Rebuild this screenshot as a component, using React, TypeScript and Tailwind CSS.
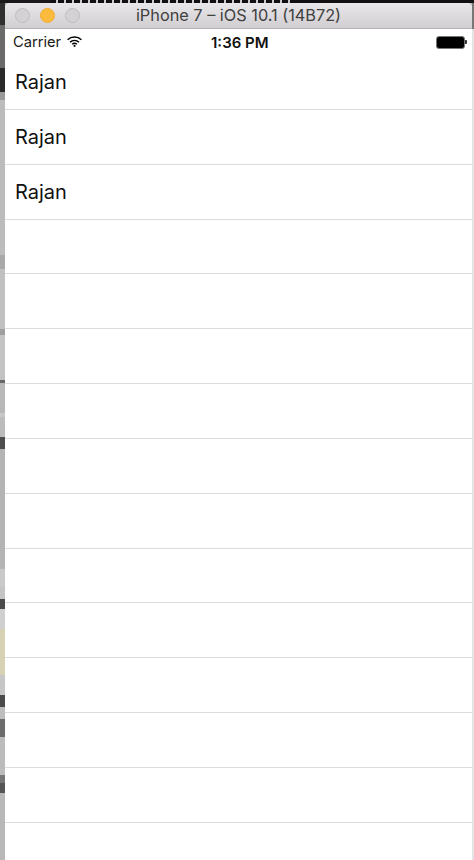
const lineCount = 14;
const names = ["Rajan", "Rajan", "Rajan"];

const leftStrip: [number, string][] = [
  [3, "#1a1a1a"], [22, "#2f2f2f"], [43, "#6a6a6a"], [24, "#2a2a2a"], [8, "#9a9a9a"],
  [155, "#bcbcbc"], [14, "#a9a9a9"], [60, "#c0c0c0"], [6, "#9f9f9f"], [45, "#c3c3c3"],
  [3, "#666666"], [30, "#b8b8b8"], [4, "#c8c8c8"], [20, "#bcbcbc"], [12, "#4d4d4d"],
  [120, "#b4b4b4"], [18, "#c9c9c9"], [12, "#c4c4c4"], [10, "#4a4a4a"], [20, "#cfcfcf"],
  [46, "#d8d2b4"], [20, "#c6c6c6"], [12, "#4a4a4a"], [12, "#bdbdbd"], [18, "#6b6b6b"],
  [38, "#bcbcbc"], [8, "#777777"], [10, "#555555"], [50, "#b8b8b8"],
];

function Wifi() {
  return (
    <svg width="15" height="11" viewBox="0 0 15 11" className="ml-[6px] -mt-[1px]">
      <path d="M0.6 3.8C4.4 0.2 10.6 0.2 14.4 3.8" fill="none" stroke="#000" strokeWidth="1.5" />
      <path d="M3 6.2C5.6 3.8 9.4 3.8 12 6.2" fill="none" stroke="#000" strokeWidth="1.5" />
      <path d="M5.2 8.3C6.6 7 8.4 7 9.8 8.3" fill="none" stroke="#000" strokeWidth="1.5" />
      <circle cx="7.5" cy="9.8" r="1.1" fill="#000" />
    </svg>
  );
}

function Battery() {
  return (
    <div className="flex items-center">
      <div className="w-[29px] h-[13px] rounded-[3px] border border-[#777777] bg-black" />
      <div className="w-[2px] h-[4px] bg-[#333333] rounded-r-[1px]" />
    </div>
  );
}

function Light({ color }: { color: string }) {
  return <div className={`w-[15px] h-[15px] rounded-full border ${color}`} />;
}

export default function App() {
  return (
    <div className="w-[474px] h-[860px] overflow-hidden flex bg-[#b8b8b8] font-['Inter',sans-serif]">
      <div className="w-[5px] shrink-0 flex flex-col">
        {leftStrip.map(([h, c], i) => (
          <div key={i} className="shrink-0" style={{ height: h, backgroundColor: c }} />
        ))}
      </div>
      <div className="flex-1 flex flex-col min-w-0">
        <div className="h-[3px] shrink-0 flex">
          <div className="w-[45px] bg-[#1a1a1a]" />
          <div className="w-[240px] bg-[repeating-linear-gradient(90deg,#111111_0,#111111_6px,#cccccc_6px,#cccccc_8px)]" />
          <div className="flex-1 bg-[#111111]" />
        </div>
        <div className="flex-1 flex flex-col min-h-0 rounded-t-[5px] overflow-hidden bg-white">
          <div className="h-[26px] shrink-0 relative flex items-center justify-center bg-gradient-to-b from-[#e9e7e9] to-[#d0ced0] border-b border-[#b5b3b5]">
            <div className="absolute left-[10px] top-[5px] flex gap-[10px]">
              <Light color="bg-[#d3d1d3] border-[#bebcbe]" />
              <Light color="bg-[#fcbb3c] border-[#eeae38]" />
              <Light color="bg-[#d3d1d3] border-[#bebcbe]" />
            </div>
            <span className="text-[16.3px] text-[#404040] leading-none">iPhone 7 – iOS 10.1 (14B72)</span>
          </div>
          <div className="h-[26px] shrink-0 relative flex items-center justify-between pl-[8px] pr-[5px] bg-white">
            <div className="flex items-center">
              <span className="text-[14.7px] text-[#1a1a1a] leading-none">Carrier</span>
              <Wifi />
            </div>
            <span className="absolute left-[206px] top-[6px] text-[15px] font-semibold text-[#111111] leading-none">1:36 PM</span>
            <Battery />
          </div>
          {Array.from({ length: lineCount }).map((_, i) => (
            <div key={i} className="h-[54.85px] shrink-0 flex items-center pl-[10px] border-b border-[#dcdcdc] box-border">
              {names[i] && <span className="text-[20px] text-[#111111] leading-none">{names[i]}</span>}
            </div>
          ))}
        </div>
      </div>
      <div className="w-[2px] shrink-0 flex flex-col bg-[#e4e4e4]">
        <div className="h-[3px] bg-[#111111]" />
        <div className="h-[26px] bg-[#777777]" />
      </div>
    </div>
  );
}
